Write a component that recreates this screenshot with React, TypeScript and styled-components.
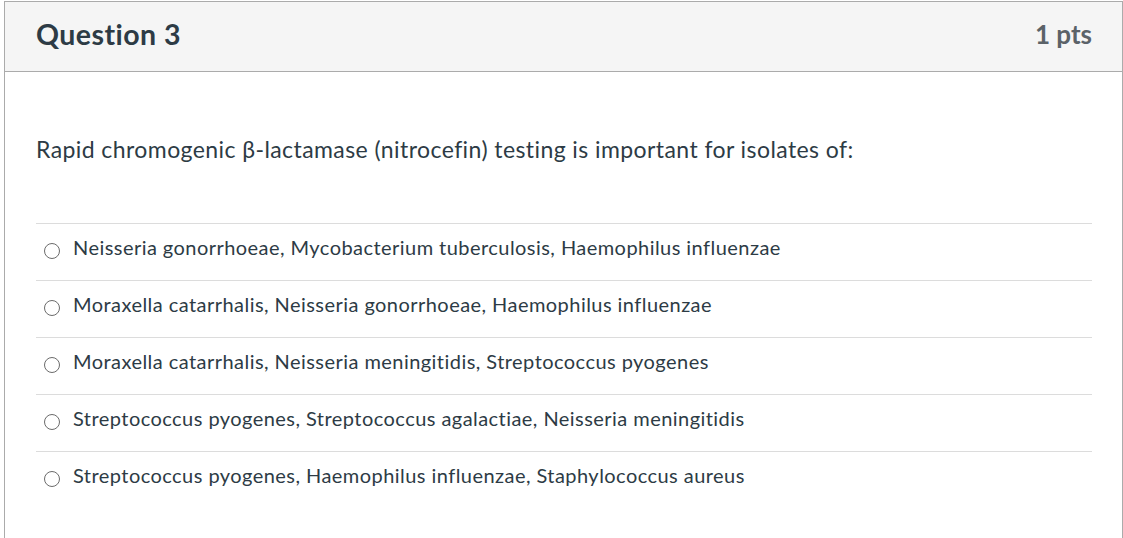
import styled, { createGlobalStyle } from "styled-components";

const GlobalStyle = createGlobalStyle`
  html, body {
    margin: 0;
    padding: 0;
    background: #fff;
    font-family: Lato, "Open Sans", "Liberation Sans", sans-serif;
    color: #2d3b45;
  }
`;

const answers = [
  "Neisseria gonorrhoeae, Mycobacterium tuberculosis, Haemophilus influenzae",
  "Moraxella catarrhalis, Neisseria gonorrhoeae, Haemophilus influenzae",
  "Moraxella catarrhalis, Neisseria meningitidis, Streptococcus pyogenes",
  "Streptococcus pyogenes, Streptococcus agalactiae, Neisseria meningitidis",
  "Streptococcus pyogenes, Haemophilus influenzae, Staphylococcus aureus",
];

export default function App() {
  return (
    <>
      <GlobalStyle />
      <Card>
        <Header>
          <Title>Question 3</Title>
          <Points>1 pts</Points>
        </Header>
        <Body>
          <QuestionText>
            Rapid chromogenic β-lactamase (nitrocefin) testing is important for isolates of:
          </QuestionText>
          <AnswerList>
            {answers.map((a, i) => (
              <Answer key={i}>
                <Radio />
                <AnswerText>{a}</AnswerText>
              </Answer>
            ))}
          </AnswerList>
        </Body>
      </Card>
    </>
  );
}

const Card = styled.div`
  box-sizing: border-box;
  margin: 1px 0 0 4px;
  width: 1119px;
  min-height: 560px;
  border: 1px solid #ababab;
  border-bottom: none;
`;

const Header = styled.div`
  box-sizing: border-box;
  height: 70px;
  display: flex;
  align-items: center;
  justify-content: space-between;
  padding: 0 30px 4px 31px;
  background: #f5f5f5;
  border-bottom: 1px solid #ababab;
`;

const Title = styled.h2`
  margin: 0;
  font-size: 28.5px;
  line-height: 1.2;
  font-weight: 700;
  letter-spacing: 0.45px;
  color: #2d3b45;
`;

const Points = styled.div`
  font-size: 26px;
  line-height: 1.2;
  font-weight: 700;
  color: #5b6268;
`;

const Body = styled.div`
  padding: 61px 30px 0 31px;
`;

const QuestionText = styled.p`
  margin: 0 0 58px;
  font-size: 23px;
  line-height: 32px;
  letter-spacing: 0.42px;
`;

const AnswerList = styled.div`
  display: flex;
  flex-direction: column;
`;

const Answer = styled.label`
  box-sizing: border-box;
  height: 57px;
  display: flex;
  align-items: flex-start;
  gap: 13px;
  padding: 11px 0 0 8px;
  border-top: 1px solid #dcdcdc;
`;

const Radio = styled.span`
  box-sizing: border-box;
  width: 16px;
  height: 16px;
  margin-top: 7.5px;
  border-radius: 50%;
  border: 1.5px solid #6b6b6b;
  flex-shrink: 0;
`;

const AnswerText = styled.span`
  font-size: 20px;
  line-height: 24px;
  letter-spacing: 0.45px;
`;
